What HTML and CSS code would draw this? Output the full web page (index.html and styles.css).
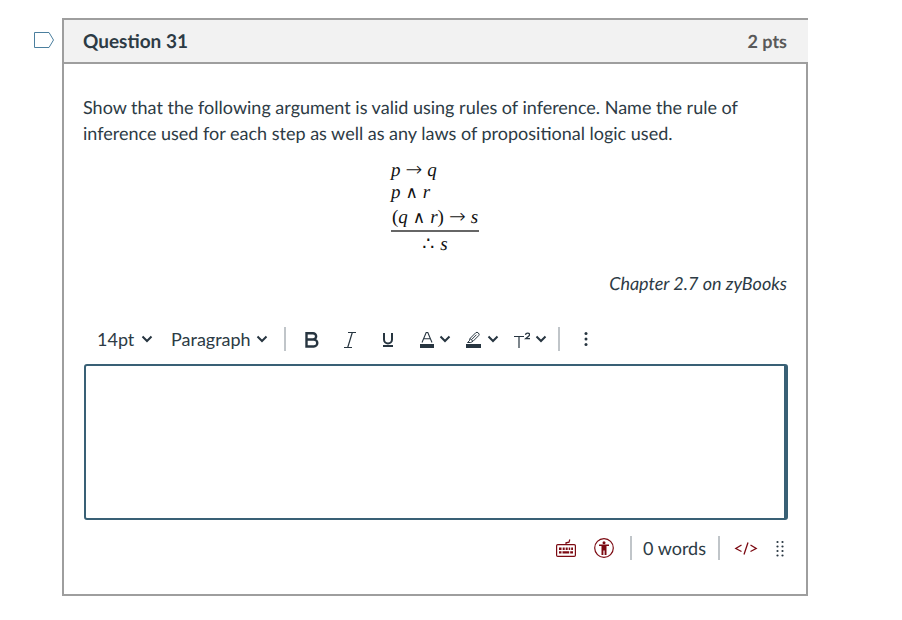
FILE: index.html
```html
<!DOCTYPE html>
<html lang="en">
<head>
    <meta charset="UTF-8">
    <meta name="viewport" content="width=device-width, initial-scale=1.0">
    <title>Question 31</title>
    <link rel="stylesheet" href="styles.css">
</head>
<body>
    <main class="quiz">
        <button type="button" class="flag-btn" aria-label="Flag question">
            <svg width="20" height="16" viewBox="0 0 20 16"><path d="M.5.5H15L19.5 8 15 15.5H.5z" fill="none" stroke="#4b7f9e"/></svg>
        </button>

        <section class="question">
            <div class="question-header">
                <h1>Question 31</h1>
                <span class="points">2 pts</span>
            </div>

            <div class="question-body">
                <p>Show that the following argument is valid using rules of inference. Name the rule of inference used for each step as well as any laws of propositional logic used.</p>

                <div class="argument">
                    <div><i>p</i><span class="op">→</span><i>q</i></div>
                    <div><i>p</i><span class="op and">∧</span><i>r</i></div>
                    <div class="last">(<i>q</i><span class="op and">∧</span><i>r</i>)<span class="op">→</span><i>s</i></div>
                    <div class="conclusion"><span class="therefore">∴</span><i>s</i></div>
                </div>

                <p class="source">Chapter 2.7 on zyBooks</p>
            </div>

            <div class="editor">
                <div class="toolbar">
                    <label class="picker size">
                        <select aria-label="Font size"><option>14pt</option></select>
                        <svg class="chevron" width="12" height="8" viewBox="0 0 12 8"><path d="M1.5 1.5 6 6l4.500-4.500"/></svg>
                    </label>
                    <label class="picker">
                        <select aria-label="Block format"><option>Paragraph</option></select>
                        <svg class="chevron" width="12" height="8" viewBox="0 0 12 8"><path d="M1.500 1.500 6 6l4.500-4.500"/></svg>
                    </label>
                    <span class="divider"></span>
                    <button type="button" class="tool" aria-label="Bold">
                        <svg width="20" height="20" viewBox="0 0 20 20"><path d="M4.500 4.200h6.500a3 3 0 0 1 0 6.300H4.500zM4.500 10.500h7.300a3.500 3.500 0 0 1 0 7H4.500z" fill="none" stroke="#273540" stroke-width="2.400"/></svg>
                    </button>
                    <button type="button" class="tool" aria-label="Italic">
                        <svg width="20" height="20" viewBox="0 0 20 20"><path d="M8 3.500h8M4 18.500h8M12.300 3.500 7.700 18.500" fill="none" stroke="#273540" stroke-width="1.200"/></svg>
                    </button>
                    <button type="button" class="tool" aria-label="Underline">
                        <svg width="20" height="20" viewBox="0 0 20 20"><path d="M6 4v6.500a4 4 0 0 0 8 0V4" fill="none" stroke="#273540" stroke-width="2"/><path d="M5 16h10v2H5z" fill="#273540"/></svg>
                    </button>
                    <button type="button" class="tool split first" aria-label="Text color">
                        <svg width="14" height="20" viewBox="0 0 14 20"><path d="M2 13.500 6.200 3.500h1.600l4.200 10M3.700 9.800h6.600" fill="none" stroke="#273540" stroke-width="1.100"/><path d="M0 15h14v4H0z" fill="#273540"/></svg>
                        <svg class="chevron" width="12" height="8" viewBox="0 0 12 8"><path d="M1.500 1.500 6 6l4.500-4.500"/></svg>
                    </button>
                    <button type="button" class="tool split" aria-label="Highlight color">
                        <svg width="16" height="20" viewBox="0 0 16 20"><path d="M4 9.500 9.800 3.700q1.200-1 2.600.3 1.400 1.400.3 2.600L7 12.300zM4 9.500l-.6 2.300L1.500 13.500h3.200L7 12.300M5.500 10.700l5-5" fill="none" stroke="#273540"/><path d="M0 15h15v4H0z" fill="#273540"/></svg>
                        <svg class="chevron" width="12" height="8" viewBox="0 0 12 8"><path d="M1.500 1.500 6 6l4.500-4.500"/></svg>
                    </button>
                    <button type="button" class="tool split" aria-label="Superscript">
                        <svg width="16" height="20" viewBox="0 0 16 20"><path d="M0 7.500h10M5 7.500V19" fill="none" stroke="#273540" stroke-width="1.200"/><path d="M11.500 5.800q.2-1.700 2.100-1.700 2 0 2 1.500 0 .9-1.300 1.900L11.800 9.600H16" fill="none" stroke="#273540" stroke-width="1.300"/></svg>
                        <svg class="chevron" width="12" height="8" viewBox="0 0 12 8"><path d="M1.500 1.500 6 6l4.500-4.500"/></svg>
                    </button>
                    <span class="divider"></span>
                    <button type="button" class="tool more" aria-label="More">
                        <svg width="4" height="16" viewBox="0 0 4 16" fill="#273540"><circle cx="2" cy="2.500" r="1.500"/><circle cx="2" cy="8" r="1.500"/><circle cx="2" cy="13.500" r="1.500"/></svg>
                    </button>
                </div>

                <textarea class="answer" aria-label="Answer"></textarea>

                <div class="statusbar">
                    <button type="button" class="tool" aria-label="Keyboard shortcuts">
                        <svg width="20" height="20" viewBox="0 0 20 20"><rect x=".6" y="6.600" width="18.800" height="11.800" rx="1.200" fill="none" stroke="#7c0a12" stroke-width="1.200"/><path d="M10 6.500V4.800l3-.6.800-2.700" fill="none" stroke="#7c0a12" stroke-width="1.200"/><path d="M3 9.500h2.500V12H3zM6.700 9.500h2V12h-2zM9.700 9.500h2V12h-2zM12.700 9.500h1.500V12h-1.500zM15.200 9.500H17V12h-1.800zM3 13.200h2.500v2.300H3zM6.500 13.200h6.700v2.300H6.500zM14.200 13.200H17v2.300h-2.800z" fill="#7c0a12"/></svg>
                    </button>
                    <button type="button" class="tool" aria-label="Accessibility checker">
                        <svg width="20" height="20" viewBox="0 0 20 20"><circle cx="10" cy="10" r="9.300" fill="none" stroke="#7c0a12" stroke-width="1.200"/><circle cx="10" cy="4.700" r="1.500" fill="#7c0a12"/><path d="M5 6.500h10v1.600h-2.500V17H10.600v-4.500H9.400V17H7.500V8.100H5z" fill="#7c0a12"/></svg>
                    </button>
                    <span class="divider"></span>
                    <span class="words">0 words</span>
                    <span class="divider"></span>
                    <button type="button" class="tool code" aria-label="HTML editor">
                        <svg width="24" height="16" viewBox="0 0 24 16"><path d="M7.500 5 1.800 8.500l5.700 3M16.500 5l5.700 3.500-5.700 3M14 2.500l-4 12" fill="none" stroke="#7c0a12" stroke-width="1.300"/></svg>
                    </button>
                    <button type="button" class="tool grip" aria-label="Resize">
                        <svg width="8" height="18" viewBox="0 0 8 18" fill="#273540"><circle cx="1.500" cy="3" r="1.100"/><circle cx="6.500" cy="3" r="1.100"/><circle cx="1.500" cy="7.500" r="1.100"/><circle cx="6.500" cy="7.500" r="1.100"/><circle cx="1.500" cy="12" r="1.100"/><circle cx="6.500" cy="12" r="1.100"/><circle cx="1.500" cy="16.500" r="1.100"/><circle cx="6.500" cy="16.500" r="1.100"/></svg>
                    </button>
                </div>
            </div>
        </section>
    </main>
</body>
</html>
```
FILE: styles.css
```css
* { box-sizing: border-box; }

body {
    margin: 0;
    background: #fff;
    font-family: Lato, sans-serif;
    font-size: 18px;
    line-height: 26px;
    color: #2d3b45;
    text-rendering: geometricPrecision;
}

.quiz {
    display: flex;
    align-items: flex-start;
    gap: 8px;
    padding: 18px 94px 24px 34px;
}

button {
    padding: 0;
    border: none;
    background: none;
    cursor: pointer;
}

svg { display: block; }

.flag-btn { margin-top: 14px; }

.question {
    flex: 1;
    border-left: 2px solid #9e9e9e;
}

.question-header {
    display: flex;
    justify-content: space-between;
    align-items: baseline;
    padding: 9px 21px 7px 19px;
    background: #f2f2f2;
    border-top: 2px solid #9e9e9e;
    border-bottom: 2px solid #9e9e9e;
}

.question-header h1 {
    margin: 0;
    font-size: 19px;
    line-height: 26px;
    font-weight: bold;
}

.points {
    line-height: 24px;
    font-weight: bold;
    color: #595959;
}

.question-body {
    padding: 30px 19px 0;
    border-right: 2px solid #9e9e9e;
}

.question-body p { margin: 0; }

.argument {
    width: max-content;
    margin: 14px auto;
    font-family: "Liberation Serif", serif;
    font-size: 19px;
    line-height: 22px;
    color: #111;
}

.argument .op {
    margin: 0 5px;
    font-family: "DejaVu Sans", sans-serif;
    font-weight: 200;
    font-size: 20px;
    line-height: 16px;
}

.argument .and { font-size: 17px; }

.argument .last {
    padding: 3px 1px 1px;
    border-bottom: 2px solid #666;
}

.conclusion {
    padding-top: 2px;
    text-align: center;
}

.therefore { margin-right: 6px; }

.question-body .source {
    text-align: right;
    font-style: italic;
}

.editor {
    padding: 30px 18px 33px 20px;
    border-right: 2px solid #9e9e9e;
    border-bottom: 2px solid #9e9e9e;
}

.toolbar, .statusbar {
    display: flex;
    align-items: center;
}

.toolbar {
    height: 26px;
    margin-bottom: 12px;
    padding-left: 13px;
}

.picker {
    display: flex;
    align-items: center;
    gap: 5px;
}

.picker.size {
    gap: 6px;
    margin-right: 18px;
}

.picker select {
    appearance: none;
    padding: 0;
    border: none;
    background: none;
    font: inherit;
    color: inherit;
}

.chevron {
    fill: none;
    stroke: #273540;
    stroke-width: 2;
}

.divider {
    width: 2px;
    height: 24px;
    background: #c0c5c9;
}

.toolbar .divider { margin: 0 16px; }

.toolbar .tool { margin-right: 18px; }

.toolbar .split {
    display: flex;
    align-items: center;
    gap: 5px;
    margin: 0 15px 0 0;
}

.toolbar .split.first { margin-left: 4px; }

.toolbar .split + .divider { margin: 0 24px 0 -4px; }

.answer {
    display: block;
    width: 100%;
    height: 156px;
    padding: 10px;
    border: 2px solid #396075;
    border-right-width: 4px;
    border-radius: 3px;
    font: inherit;
    color: inherit;
    resize: none;
    outline: none;
}

.statusbar {
    justify-content: flex-end;
    margin-top: 15px;
    padding-right: 4px;
}

.statusbar .tool { margin-right: 18px; }

.statusbar .tool + .divider { margin-left: -2px; }

.words { margin: 0 12px 0 11px; }

.statusbar .code { margin: 0 18px 0 14px; }

.statusbar .grip { margin: 0; }
```
